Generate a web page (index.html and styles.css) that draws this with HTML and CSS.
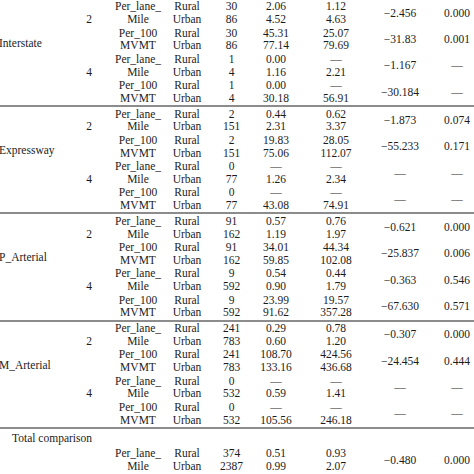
FILE: index.html
```html
<!DOCTYPE html>
<html>
<head>
<meta charset="utf-8">
<link rel="stylesheet" href="styles.css">
</head>
<body>
<div class="table">
  <div class="block">
    <div class="road">Interstate</div>
    <div class="lane a">2</div>
    <div class="lane b">4</div>
    <div class="pair p1"><div class="c unit"><span>Per_lane_</span><span>Mile</span></div><div class="c area"><span>Rural</span><span>Urban</span></div><div class="c n"><span>30</span><span>86</span></div><div class="c r1"><span>2.06</span><span>4.52</span></div><div class="c r2"><span>1.12</span><span>4.63</span></div><div class="c st">−2.456</div><div class="c pv">0.000</div></div>
    <div class="pair p2"><div class="c unit"><span>Per_100</span><span>MVMT</span></div><div class="c area"><span>Rural</span><span>Urban</span></div><div class="c n"><span>30</span><span>86</span></div><div class="c r1"><span>45.31</span><span>77.14</span></div><div class="c r2"><span>25.07</span><span>79.69</span></div><div class="c st">−31.83</div><div class="c pv">0.001</div></div>
    <div class="pair p3"><div class="c unit"><span>Per_lane_</span><span>Mile</span></div><div class="c area"><span>Rural</span><span>Urban</span></div><div class="c n"><span>1</span><span>4</span></div><div class="c r1"><span>0.00</span><span>1.16</span></div><div class="c r2"><span>—</span><span>2.21</span></div><div class="c st">−1.167</div><div class="c pv">—</div></div>
    <div class="pair p4"><div class="c unit"><span>Per_100</span><span>MVMT</span></div><div class="c area"><span>Rural</span><span>Urban</span></div><div class="c n"><span>1</span><span>4</span></div><div class="c r1"><span>0.00</span><span>30.18</span></div><div class="c r2"><span>—</span><span>56.91</span></div><div class="c st">−30.184</div><div class="c pv">—</div></div>
  </div>
  <div class="block">
    <div class="road">Expressway</div>
    <div class="lane a">2</div>
    <div class="lane b">4</div>
    <div class="pair p1"><div class="c unit"><span>Per_lane_</span><span>Mile</span></div><div class="c area"><span>Rural</span><span>Urban</span></div><div class="c n"><span>2</span><span>151</span></div><div class="c r1"><span>0.44</span><span>2.31</span></div><div class="c r2"><span>0.62</span><span>3.37</span></div><div class="c st">−1.873</div><div class="c pv">0.074</div></div>
    <div class="pair p2"><div class="c unit"><span>Per_100</span><span>MVMT</span></div><div class="c area"><span>Rural</span><span>Urban</span></div><div class="c n"><span>2</span><span>151</span></div><div class="c r1"><span>19.83</span><span>75.06</span></div><div class="c r2"><span>28.05</span><span>112.07</span></div><div class="c st">−55.233</div><div class="c pv">0.171</div></div>
    <div class="pair p3"><div class="c unit"><span>Per_lane_</span><span>Mile</span></div><div class="c area"><span>Rural</span><span>Urban</span></div><div class="c n"><span>0</span><span>77</span></div><div class="c r1"><span>—</span><span>1.26</span></div><div class="c r2"><span>—</span><span>2.34</span></div><div class="c st">—</div><div class="c pv">—</div></div>
    <div class="pair p4"><div class="c unit"><span>Per_100</span><span>MVMT</span></div><div class="c area"><span>Rural</span><span>Urban</span></div><div class="c n"><span>0</span><span>77</span></div><div class="c r1"><span>—</span><span>43.08</span></div><div class="c r2"><span>—</span><span>74.91</span></div><div class="c st">—</div><div class="c pv">—</div></div>
  </div>
  <div class="block">
    <div class="road">P_Arterial</div>
    <div class="lane a">2</div>
    <div class="lane b">4</div>
    <div class="pair p1"><div class="c unit"><span>Per_lane_</span><span>Mile</span></div><div class="c area"><span>Rural</span><span>Urban</span></div><div class="c n"><span>91</span><span>162</span></div><div class="c r1"><span>0.57</span><span>1.19</span></div><div class="c r2"><span>0.76</span><span>1.97</span></div><div class="c st">−0.621</div><div class="c pv">0.000</div></div>
    <div class="pair p2"><div class="c unit"><span>Per_100</span><span>MVMT</span></div><div class="c area"><span>Rural</span><span>Urban</span></div><div class="c n"><span>91</span><span>162</span></div><div class="c r1"><span>34.01</span><span>59.85</span></div><div class="c r2"><span>44.34</span><span>102.08</span></div><div class="c st">−25.837</div><div class="c pv">0.006</div></div>
    <div class="pair p3"><div class="c unit"><span>Per_lane_</span><span>Mile</span></div><div class="c area"><span>Rural</span><span>Urban</span></div><div class="c n"><span>9</span><span>592</span></div><div class="c r1"><span>0.54</span><span>0.90</span></div><div class="c r2"><span>0.44</span><span>1.79</span></div><div class="c st">−0.363</div><div class="c pv">0.546</div></div>
    <div class="pair p4"><div class="c unit"><span>Per_100</span><span>MVMT</span></div><div class="c area"><span>Rural</span><span>Urban</span></div><div class="c n"><span>9</span><span>592</span></div><div class="c r1"><span>23.99</span><span>91.62</span></div><div class="c r2"><span>19.57</span><span>357.28</span></div><div class="c st">−67.630</div><div class="c pv">0.571</div></div>
  </div>
  <div class="block">
    <div class="road">M_Arterial</div>
    <div class="lane a">2</div>
    <div class="lane b">4</div>
    <div class="pair p1"><div class="c unit"><span>Per_lane_</span><span>Mile</span></div><div class="c area"><span>Rural</span><span>Urban</span></div><div class="c n"><span>241</span><span>783</span></div><div class="c r1"><span>0.29</span><span>0.60</span></div><div class="c r2"><span>0.78</span><span>1.20</span></div><div class="c st">−0.307</div><div class="c pv">0.000</div></div>
    <div class="pair p2"><div class="c unit"><span>Per_100</span><span>MVMT</span></div><div class="c area"><span>Rural</span><span>Urban</span></div><div class="c n"><span>241</span><span>783</span></div><div class="c r1"><span>108.70</span><span>133.16</span></div><div class="c r2"><span>424.56</span><span>436.68</span></div><div class="c st">−24.454</div><div class="c pv">0.444</div></div>
    <div class="pair p3"><div class="c unit"><span>Per_lane_</span><span>Mile</span></div><div class="c area"><span>Rural</span><span>Urban</span></div><div class="c n"><span>0</span><span>532</span></div><div class="c r1"><span>—</span><span>0.59</span></div><div class="c r2"><span>—</span><span>1.41</span></div><div class="c st">—</div><div class="c pv">—</div></div>
    <div class="pair p4"><div class="c unit"><span>Per_100</span><span>MVMT</span></div><div class="c area"><span>Rural</span><span>Urban</span></div><div class="c n"><span>0</span><span>532</span></div><div class="c r1"><span>—</span><span>105.56</span></div><div class="c r2"><span>—</span><span>246.18</span></div><div class="c st">—</div><div class="c pv">—</div></div>
  </div>
  <div class="total">
    <div class="total-label">Total comparison</div>
    <div class="pair tp"><div class="c unit"><span>Per_lane_</span><span>Mile</span></div><div class="c area"><span>Rural</span><span>Urban</span></div><div class="c n"><span>374</span><span>2387</span></div><div class="c r1"><span>0.51</span><span>0.99</span></div><div class="c r2"><span>0.93</span><span>2.07</span></div><div class="c st">−0.480</div><div class="c pv">0.000</div></div>
  </div>
</div>
</body>
</html>
```

FILE: styles.css
```css
html, body {
  margin: 0;
  padding: 0;
  overflow: hidden;
  background: #fff;
}
body {
  font-family: "Liberation Serif", "Times New Roman", serif;
  font-size: 11.5px;
  line-height: 12.8px;
  color: #1c1c1c;
}
.table {
  width: 485px;
}
.block {
  display: grid;
  grid-template-columns: 64px 50px 371px;
  grid-template-rows: repeat(4, 26.3px);
}
.block + .block,
.total {
  border-top: 2px solid #8c8c8c;
}
.road {
  grid-column: 1;
  grid-row: 2;
  align-self: center;
  padding-top: 8px;
  margin-left: -1px;
  white-space: nowrap;
}
.lane {
  grid-column: 2;
  align-self: end;
  text-align: center;
  padding-bottom: 0.35px;
}
.lane.a { grid-row: 1; }
.lane.b { grid-row: 3; }
.pair {
  grid-column: 3;
  display: flex;
  align-items: center;
}
.p1 { grid-row: 1; }
.p2 { grid-row: 2; }
.p3 { grid-row: 3; }
.p4 { grid-row: 4; }
.c {
  display: flex;
  flex-direction: column;
  text-align: center;
  white-space: nowrap;
  flex: none;
}
.unit { width: 48px; }
.area { width: 50px; }
.n { width: 39px; }
.r1 { width: 50px; }
.r2 { width: 70px; }
.st { width: 58px; }
.pv { width: 56px; }
.total-label {
  padding: 3px 0 0 12px;
  height: 12.8px;
}
.tp {
  margin-left: 114px;
  padding-top: 2.5px;
  line-height: 13.2px;
}
```
